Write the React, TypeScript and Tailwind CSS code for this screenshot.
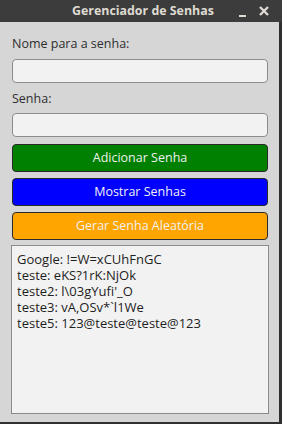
import React from "react";

const font = { fontFamily: '"Open Sans", "DejaVu Sans", sans-serif' };

export default function App() {
  const lines = [
    "Google: !=W=xCUhFnGC",
    "teste: eKS?1rK:NjOk",
    "teste2: l\\03gYufi'_O",
    "teste3: vA,OSv*`l1We",
    "teste5: 123@teste@teste@123",
  ];
  return (
    <div className="w-[282px] h-[424px] bg-[#2f2f2f] flex flex-col overflow-hidden" style={font}>
      <div className="h-[22px] bg-[#3c3c3c] flex items-center shrink-0">
        <div className="w-[72px]" />
        <div className="text-[12.4px] font-bold text-[#dfdbd2] leading-none">Gerenciador de Senhas</div>
        <div className="flex-1" />
        <div className="w-[7px] h-[2px] bg-[#dfdbd2] mt-[9px] mr-[13px]" />
        <svg width="10" height="10" viewBox="0 0 10 10" className="mr-[13px]">
          <path d="M1 1 L9 9 M9 1 L1 9" stroke="#dfdbd2" strokeWidth="2.4" />
        </svg>
      </div>
      <div className="flex-1 bg-[#d6d6d6] mr-[3px] mb-[2px] flex flex-col pl-[12px] pr-[11px] pt-[13px]">
        <div className="text-[12.5px] leading-[17px] text-[#2e2e2e] h-[17px]">Nome para a senha:</div>
        <div className="mt-[7px] h-[24px] bg-[#f2f2f2] border border-[#8c8c8c] rounded-[4px]" />
        <div className="mt-[7px] text-[12.5px] leading-[17px] text-[#2e2e2e] h-[17px]">Senha:</div>
        <div className="mt-[6px] h-[24px] bg-[#f2f2f2] border border-[#8c8c8c] rounded-[4px]" />
        <div className="mt-[7px] h-[28px] bg-[#008000] border border-[#2a2a2a] rounded-[4px] flex items-center justify-center text-[12.5px] text-[#f0f0f0]">
          Adicionar Senha
        </div>
        <div className="mt-[6px] h-[28px] bg-[#0000ff] border border-[#2a2a2a] rounded-[4px] flex items-center justify-center text-[12.5px] text-[#f0f0f0]">
          Mostrar Senhas
        </div>
        <div className="mt-[6px] h-[28px] bg-[#ffa500] border border-[#2a2a2a] rounded-[4px] flex items-center justify-center text-[12.5px] text-[#f0f0f0]">
          Gerar Senha Aleatória
        </div>
        <div className="mt-[5px] -mx-[1px] h-[169px] bg-[#f2f2f2] border border-[#8c8c8c] px-[5px] pt-[5px]">
          {lines.map((l, i) => (
            <div key={i} className="text-[13px] leading-[16px] text-[#1e1e1e] whitespace-pre">
              {l}
            </div>
          ))}
        </div>
      </div>
    </div>
  );
}
